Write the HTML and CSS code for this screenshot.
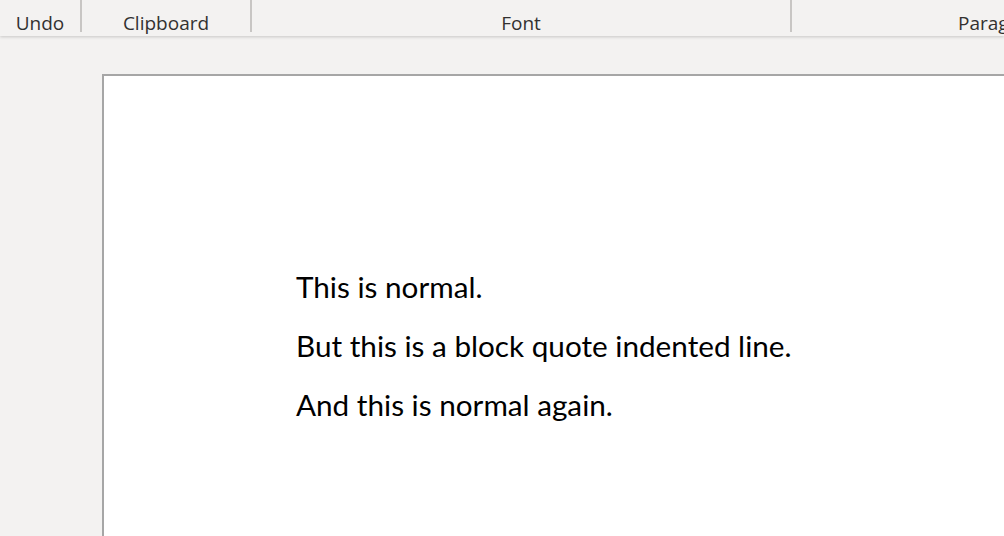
FILE: index.html
```html
<!DOCTYPE html>
<html lang="en">

<head>
  <meta charset="UTF-8" />
  <title>Block quote</title>
  <link rel="stylesheet" href="styles.css">
</head>

<body>
  <div class="ribbon">
    <div class="group undo">Undo</div>
    <div class="group clipboard">Clipboard</div>
    <div class="group font">Font</div>
    <div class="group para">Paragraph</div>
  </div>

  <div class="canvas">
    <div class="page">
      <p>This is normal.</p>
      <p>But this is a block quote indented line.</p>
      <p>And this is normal again.</p>
    </div>
  </div>
</body>

</html>
```

FILE: styles.css
```css
body {
  margin: 0;
  background-color: #f3f2f1;
  overflow: hidden;
  height: 536px;
}

.ribbon {
  display: flex;
  height: 36px;
  background-color: #f3f2f1;
  box-shadow: 0 1px 3px rgba(0, 0, 0, 0.18);
  position: relative;
  font-family: "Open Sans", sans-serif;
  font-size: 19px;
  color: #323130;
  overflow: hidden;
}

.group {
  flex-shrink: 0;
  height: 32px;
  line-height: 47px;
  text-align: center;
  border-right: 2px solid #c8c6c4;
  box-sizing: border-box;
  white-space: nowrap;
}

.undo {
  width: 82px;
}

.clipboard {
  width: 170px;
}

.font {
  width: 540px;
}

.para {
  border-right: none;
  text-align: left;
  padding-left: 166px;
}

.canvas {
  padding: 38px 0 0 102px;
}

.page {
  background-color: #fff;
  border-top: 2px solid #a6a6a6;
  border-left: 2px solid #a6a6a6;
  height: 600px;
  padding: 193px 0 0 192px;
  box-sizing: border-box;
  font-family: "Lato", sans-serif;
  font-size: 29.7px;
  color: #000;
}

.page p {
  margin: 0 0 24px 0;
  line-height: 35px;
}
```
